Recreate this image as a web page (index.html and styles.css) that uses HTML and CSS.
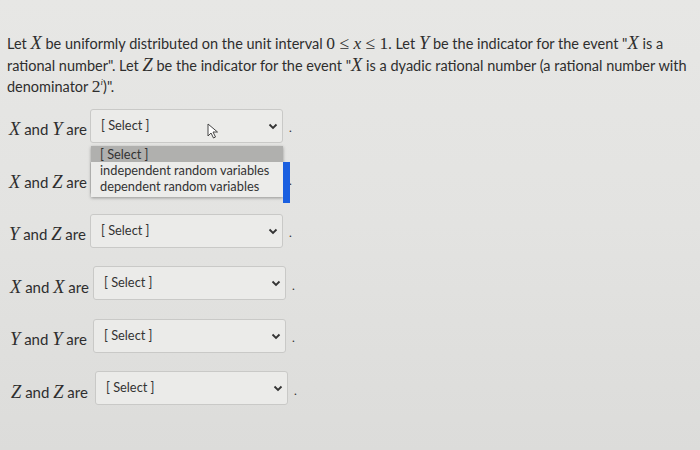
FILE: index.html
```html
<!DOCTYPE html>
<html>
<head>
<meta charset="utf-8">
<link rel="stylesheet" href="styles.css">
</head>
<body>
<div class="page">
  <p class="question">Let <span class="m">X</span> be uniformly distributed on the unit interval <span class="mr">0 ≤ <span class="mi">x</span> ≤ 1</span>. Let <span class="m">Y</span> be the indicator for the event "<span class="m">X</span> is a rational number". Let <span class="m">Z</span> be the indicator for the event "<span class="m">X</span> is a dyadic rational number (a rational number with denominator <span class="mr">2<sup class="sup">i</sup></span>)".</p>

  <div class="rows">
    <div class="row">
      <span class="label"><span class="m">X</span> and <span class="m">Y</span> are</span>
      <div class="select-wrap">
        <div class="select">
          <span class="sel-text">[ Select ]</span>
          <svg class="chev" width="10" height="7" viewBox="0 0 10 7"><path d="M1.5 1.5 L5 5 L8.5 1.5" fill="none" stroke="#333" stroke-width="1.8"/></svg>
        </div>
        <div class="menu">
          <div class="opt hl">[ Select ]</div>
          <div class="opt">independent random variables</div>
          <div class="opt">dependent random variables</div>
        </div>
        <div class="scrollbar"></div>
        <svg class="cursor" width="12" height="16" viewBox="0 0 12 16"><path d="M1 1 L1 13 L4 10 L6.5 15 L8.5 14 L6 9 L10.5 9 Z" fill="#fff" stroke="#444" stroke-width="1"/></svg>
      </div>
      <span class="dot">.</span>
    </div>
    <div class="row">
      <span class="label"><span class="m">X</span> and <span class="m">Z</span> are</span>
      <div class="select-wrap">
        <div class="select"><span class="sel-text">[ Select ]</span></div>
      </div>
      <span class="dot">.</span>
    </div>
    <div class="row">
      <span class="label"><span class="m">Y</span> and <span class="m">Z</span> are</span>
      <div class="select-wrap">
        <div class="select">
          <span class="sel-text">[ Select ]</span>
          <svg class="chev" width="10" height="7" viewBox="0 0 10 7"><path d="M1.5 1.5 L5 5 L8.5 1.5" fill="none" stroke="#333" stroke-width="1.8"/></svg>
        </div>
      </div>
      <span class="dot">.</span>
    </div>
    <div class="row shift">
      <span class="label"><span class="m">X</span> and <span class="m">X</span> are</span>
      <div class="select-wrap">
        <div class="select">
          <span class="sel-text">[ Select ]</span>
          <svg class="chev" width="10" height="7" viewBox="0 0 10 7"><path d="M1.5 1.5 L5 5 L8.5 1.5" fill="none" stroke="#333" stroke-width="1.8"/></svg>
        </div>
      </div>
      <span class="dot">.</span>
    </div>
    <div class="row shift">
      <span class="label"><span class="m">Y</span> and <span class="m">Y</span> are</span>
      <div class="select-wrap">
        <div class="select">
          <span class="sel-text">[ Select ]</span>
          <svg class="chev" width="10" height="7" viewBox="0 0 10 7"><path d="M1.5 1.5 L5 5 L8.5 1.5" fill="none" stroke="#333" stroke-width="1.8"/></svg>
        </div>
      </div>
      <span class="dot">.</span>
    </div>
    <div class="row shift2">
      <span class="label"><span class="m">Z</span> and <span class="m">Z</span> are</span>
      <div class="select-wrap">
        <div class="select">
          <span class="sel-text">[ Select ]</span>
          <svg class="chev" width="10" height="7" viewBox="0 0 10 7"><path d="M1.5 1.5 L5 5 L8.5 1.5" fill="none" stroke="#333" stroke-width="1.8"/></svg>
        </div>
      </div>
      <span class="dot">.</span>
    </div>
  </div>
</div>
</body>
</html>
```

FILE: styles.css
```css
html, body {
  margin: 0;
  padding: 0;
}
body {
  width: 700px;
  height: 450px;
  overflow: hidden;
  background: linear-gradient(180deg, #e7e7e5 0%, #e3e3e1 50%, #dcdcda 100%);
  font-family: Lato, "Liberation Sans", sans-serif;
  color: #2e2e2e;
}
.page {
  padding: 33px 0 0 7px;
}
.question {
  margin: 0;
  font-size: 14.5px;
  line-height: 21.5px;
  width: 693px;
}
.m {
  font-family: "Liberation Serif", "DejaVu Serif", serif;
  font-style: italic;
  font-size: 18.5px;
}
.mr {
  font-family: "Liberation Serif", "DejaVu Serif", serif;
  font-size: 17.5px;
}
.mi {
  font-style: italic;
}
.sup {
  font-size: 9px;
  font-style: italic;
  vertical-align: 7px;
  line-height: 0;
}
.rows {
  margin-top: 11px;
  display: flex;
  flex-direction: column;
  gap: 18.5px;
}
.row {
  display: flex;
  align-items: center;
  height: 34px;
  padding-left: 2px;
}
.row.shift { padding-left: 3px; }
.row.shift2 { padding-left: 4px; }
.label {
  font-size: 15px;
  width: 81px;
  white-space: nowrap;
  margin-top: 8px;
}
.row.shift .label { width: 83px; }
.row.shift2 .label { width: 84px; }
.select-wrap {
  position: relative;
  width: 193px;
  height: 34px;
}
.select {
  box-sizing: border-box;
  width: 100%;
  height: 100%;
  border: 1px solid #c9c9c7;
  border-radius: 3px;
  background: #ebebe9;
  display: flex;
  align-items: center;
  justify-content: space-between;
  padding: 0 4px 2px 10px;
}
.sel-text {
  font-size: 12.8px;
  color: #333;
}
.chev {
  margin-top: 3px;
}
.dot {
  font-size: 12px;
  margin-left: 6px;
  margin-top: 4px;
}
.menu {
  position: absolute;
  top: 37px;
  left: 1px;
  width: 192px;
  background: #ececea;
  box-shadow: 0 1px 3px rgba(0,0,0,0.35);
  z-index: 5;
  font-size: 12.8px;
  color: #333;
}
.opt {
  padding: 0 0 0 9px;
  height: 16px;
  line-height: 16px;
  white-space: nowrap;
}
.opt.hl {
  background: #b0b0ae;
}
.menu .opt:last-child { height: 19px; }
.scrollbar {
  position: absolute;
  top: 53px;
  left: 193px;
  width: 7px;
  height: 41px;
  background: #1a5fe0;
  z-index: 6;
}
.cursor {
  position: absolute;
  left: 117px;
  top: 14px;
  z-index: 7;
}
```
